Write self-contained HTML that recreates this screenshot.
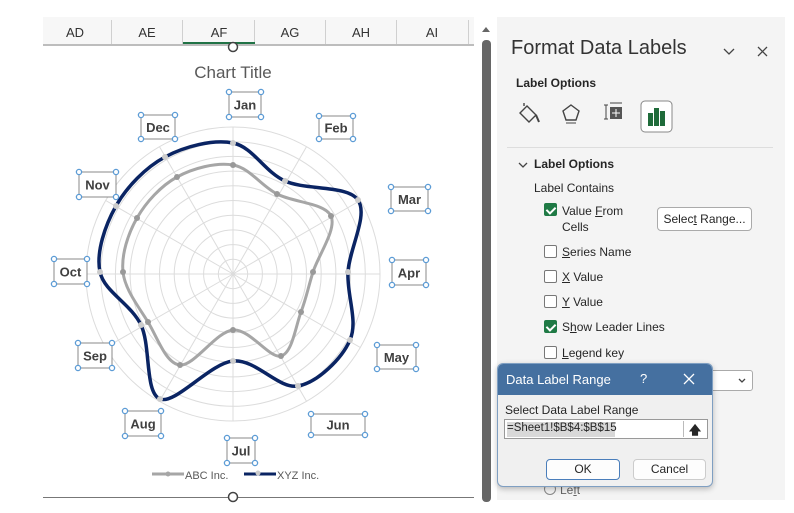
<!DOCTYPE html>
<html><head><meta charset="utf-8"><style>
*{margin:0;padding:0;box-sizing:border-box}
body{width:794px;height:513px;background:#fff;position:relative;overflow:hidden;font-family:"Liberation Sans",sans-serif;color:#262626}
.abs{position:absolute}
.hdr{left:43px;top:17px;width:431px;height:29px;background:#f7f7f7;border-bottom:2px solid #bdbdbd}
.col{position:absolute;top:8px;font-size:13px;color:#333;transform:translateX(-50%)}
.div{position:absolute;top:3px;width:1px;height:24px;background:#d0d0d0}
.panel{left:497px;top:17px;width:288px;height:483px;background:#f4f4f4}
.t{position:absolute;font-size:12px;white-space:nowrap}
.cb{position:absolute;width:13px;height:13px;border:1px solid #777;border-radius:2px;background:#fff}
.cb.on{background:#1f7a45;border-color:#1f7a45}
.cb.on:after{content:"";position:absolute;left:3px;top:1px;width:4px;height:7px;border:solid #fff;border-width:0 2px 2px 0;transform:rotate(45deg)}
u{text-decoration:underline}
</style></head><body>
<div class="abs hdr">
<span class="col" style="left:32px">AD</span><span class="col" style="left:104px">AE</span><span class="col" style="left:176px">AF</span><span class="col" style="left:247px">AG</span><span class="col" style="left:318px">AH</span><span class="col" style="left:389px">AI</span>
<div class="div" style="left:68px"></div><div class="div" style="left:139px"></div><div class="div" style="left:211px"></div><div class="div" style="left:282px"></div><div class="div" style="left:353px"></div><div class="div" style="left:425px"></div>
<div class="abs" style="left:140px;top:25px;width:72px;height:2px;background:#217346"></div>
</div>
<div class="abs" style="left:482px;top:40px;width:9px;height:462px;background:#666;border-radius:4px"></div>
<div class="abs" style="left:482px;top:27px;width:0;height:0;border-left:4px solid transparent;border-right:4px solid transparent;border-bottom:5px solid #666"></div>
<div class="abs" style="left:43px;top:497px;width:431px;height:1px;background:#777"></div>

<svg class="abs" style="left:0;top:0" width="480" height="513" id="ch">
<g stroke="#dcdcdc" fill="none" stroke-width="1" id="grid"></g>
<path id="abc" fill="none" stroke="#a6a6a6" stroke-width="3"/>
<path id="xyz" fill="none" stroke="#0a2463" stroke-width="3.5"/>
<g id="pts"></g>
<text x="233" y="78" font-size="17" fill="#595959" text-anchor="middle" font-family="Liberation Sans">Chart Title</text>
<g id="labs" font-family="Liberation Sans" font-weight="bold" font-size="13" fill="#404040"></g>
<line x1="152" y1="474" x2="184" y2="474" stroke="#a6a6a6" stroke-width="3"/><circle cx="168" cy="474" r="2.5" fill="#a6a6a6"/>
<text x="185" y="479" font-size="11" fill="#595959">ABC Inc.</text>
<line x1="244" y1="474" x2="276" y2="474" stroke="#0a2463" stroke-width="3"/><circle cx="258" cy="473" r="2.5" fill="#ccc"/>
<text x="277" y="479" font-size="11" fill="#595959">XYZ Inc.</text>
<circle cx="233" cy="497" r="4.5" fill="#fff" stroke="#444" stroke-width="1.5"/>
<circle cx="233" cy="47" r="4.5" fill="#fff" stroke="#444" stroke-width="1.5"/>
</svg>

<div class="abs panel">
<div class="t" style="left:14px;top:20px;font-size:20px;color:#333">Format Data Labels</div>
<svg class="abs" style="left:225px;top:28px" width="50" height="14"><path d="M2 4l5 5 5-5" stroke="#444" fill="none" stroke-width="1.3"/><path d="M36 2l9 9M45 2l-9 9" stroke="#444" stroke-width="1.3"/></svg>
<div class="t" style="left:19px;top:59px;font-weight:bold">Label Options</div>
<svg class="abs" style="left:15px;top:82px" width="170" height="42">
<path d="M8 14l7-7 9 9-7 7z" fill="none" stroke="#444" stroke-width="1.4"/><path d="M24 16l3 7" stroke="#444" stroke-width="2"/><path d="M12 7v-3" stroke="#444" stroke-width="1.4"/>
<path d="M59 6l8 6-3 9h-10l-3-9z" fill="none" stroke="#444" stroke-width="1.4"/><path d="M54 24h10" stroke="#444"/>
<path d="M94 6v14M92 6h4M92 20h4M98 4h12" stroke="#444"/><rect x="98" y="8" width="12" height="12" fill="#555"/><path d="M104 10v8M100 14h8" stroke="#fff"/>
<rect x="129" y="2" width="31" height="31" rx="4" fill="#fff" stroke="#888"/><rect x="136" y="14" width="5" height="13" fill="#1f6b3a"/><rect x="142" y="9" width="5" height="18" fill="#1f6b3a"/><rect x="148" y="12" width="5" height="15" fill="#1f6b3a"/>
</svg>
<div class="abs" style="left:10px;top:130px;width:266px;height:1px;background:#ddd"></div>
<svg class="abs" style="left:21px;top:144px" width="10" height="8"><path d="M1 2l4 4 4-4" stroke="#444" fill="none" stroke-width="1.3"/></svg>
<div class="t" style="left:37px;top:140px;font-weight:bold">Label Options</div>
<div class="t" style="left:37px;top:164px">Label Contains</div>
<div class="cb on" style="left:47px;top:186px"></div><div class="t" style="left:65px;top:186px;line-height:16px">Value <u>F</u>rom<br>Cells</div>
<div class="abs" style="left:160px;top:190px;width:95px;height:24px;background:#fff;border:1px solid #aaa;border-radius:4px;font-size:12px;text-align:center;line-height:22px">Selec<u>t</u> Range...</div>
<div class="cb" style="left:47px;top:228px"></div><div class="t" style="left:65px;top:228px"><u>S</u>eries Name</div>
<div class="cb" style="left:47px;top:253px"></div><div class="t" style="left:65px;top:253px"><u>X</u> Value</div>
<div class="cb" style="left:47px;top:278px"></div><div class="t" style="left:65px;top:278px"><u>Y</u> Value</div>
<div class="cb on" style="left:47px;top:303px"></div><div class="t" style="left:65px;top:303px">S<u>h</u>ow Leader Lines</div>
<div class="cb" style="left:47px;top:329px"></div><div class="t" style="left:65px;top:329px"><u>L</u>egend key</div>
<div class="abs" style="left:200px;top:353px;width:56px;height:21px;background:#fff;border:1px solid #aaa;border-radius:3px"></div>
<svg class="abs" style="left:241px;top:361px" width="8" height="6"><path d="M1 1l3 3 3-3" stroke="#444" fill="none" stroke-width="1.3"/></svg>
<div class="abs" style="left:47px;top:466px;width:12px;height:12px;border:1px solid #888;border-radius:50%"></div><div class="t" style="left:63px;top:466px;color:#666">Le<u>f</u>t</div>
</div>

<div class="abs" style="left:497px;top:363px;width:216px;height:124px;background:#f0f0f0;border:1px solid #7f9fc2;border-radius:6px;overflow:hidden;box-shadow:0 2px 6px rgba(0,0,0,.25)">
<div style="height:31px;background:#4570a0;color:#fff;position:relative">
<div class="t" style="left:8px;top:8px;font-size:13px;color:#fff">Data Label Range</div>
<div class="t" style="left:142px;top:7px;font-size:13px;color:#fff">?</div>
<svg class="abs" style="left:185px;top:9px" width="12" height="12"><path d="M1 1l10 10M11 1l-10 10" stroke="#fff" stroke-width="1.3"/></svg>
</div>
<div class="t" style="left:7px;top:39px">Select Data Label Range</div>
<div class="abs" style="left:6px;top:55px;width:204px;height:20px;background:#fff;border:1px solid #999"></div>
<div class="abs" style="left:9px;top:58px;height:15px;width:108px;background:#d8d8d8"></div>
<div class="t" style="left:9px;top:58px;font-size:11.5px">=Sheet1!$B$4:$B$15</div>
<div class="abs" style="left:185px;top:57px;width:23px;height:16px;border-left:1px solid #bbb;text-align:center;font-size:12px;font-weight:bold">&#129093;</div>
<div class="abs" style="left:48px;top:95px;width:74px;height:21px;background:#fdfdfd;border:1px solid #4a7ebb;border-radius:4px;text-align:center;font-size:12px;line-height:19px">OK</div>
<div class="abs" style="left:135px;top:95px;width:73px;height:21px;background:#fdfdfd;border:1px solid #ccc;border-radius:4px;text-align:center;font-size:12px;line-height:19px">Cancel</div>
</div>

<script>
var cx=233,cy=274,R=147,NS="http://www.w3.org/2000/svg";
var g=document.getElementById('grid'),s='';
for(var i=1;i<=10;i++)s+='<circle cx="'+cx+'" cy="'+cy+'" r="'+(R*i/10)+'"/>';
for(var k=0;k<12;k++){var a=k*Math.PI/6;s+='<line x1="'+cx+'" y1="'+cy+'" x2="'+(cx+R*Math.sin(a))+'" y2="'+(cy-R*Math.cos(a))+'"/>';}
g.innerHTML=s;
function cr(p){var n=p.length,d='M'+p[0][0]+' '+p[0][1];for(var i=0;i<n;i++){var p0=p[(i-1+n)%n],p1=p[i],p2=p[(i+1)%n],p3=p[(i+2)%n];
d+=' C'+(p1[0]+(p2[0]-p0[0])/6)+' '+(p1[1]+(p2[1]-p0[1])/6)+' '+(p2[0]-(p3[0]-p1[0])/6)+' '+(p2[1]-(p3[1]-p1[1])/6)+' '+p2[0]+' '+p2[1];}return d+'Z';}
var X=[[233,143],[285,181],[358,200],[348,272],[350,340],[298,386],[233,361],[160,399],[141,325],[100,272],[116,206],[165,157]];
var A=[[233,165],[277,194],[331,216],[313,272],[301,312],[281,356],[233,330],[180,365],[148,322],[123,272],[137,218],[177,177]];
document.getElementById('xyz').setAttribute('d',cr(X));
document.getElementById('abc').setAttribute('d',cr(A));
var ps='';A.forEach(function(p){ps+='<circle cx="'+p[0]+'" cy="'+p[1]+'" r="3" fill="#999"/>'});
X.forEach(function(p){ps+='<circle cx="'+p[0]+'" cy="'+p[1]+'" r="3" fill="#ccc"/>'});
document.getElementById('pts').innerHTML=ps;
var L=[["Jan",229,92,261,117],["Feb",319,116,353,139],["Mar",391,187,428,211],["Apr",392,260,426,285],["May",377,345,416,369],["Jun",311,414,365,435],["Jul",227,438,255,463],["Aug",125,411,161,436],["Sep",78,343,112,368],["Oct",54,259,87,284],["Nov",79,172,116,197],["Dec",141,115,175,139]];
var ls='';L.forEach(function(l){var x1=l[1],y1=l[2],x2=l[3],y2=l[4];
ls+='<rect x="'+x1+'" y="'+y1+'" width="'+(x2-x1)+'" height="'+(y2-y1)+'" fill="#fff" stroke="#888" stroke-width="1"/>';
ls+='<text x="'+((x1+x2)/2)+'" y="'+((y1+y2)/2+5)+'" text-anchor="middle">'+l[0]+'</text>';
[[x1,y1],[x2,y1],[x1,y2],[x2,y2]].forEach(function(c){ls+='<circle cx="'+c[0]+'" cy="'+c[1]+'" r="2.6" fill="#fff" stroke="#5b9bd5" stroke-width="1.3"/>'});});
document.getElementById('labs').innerHTML=ls;
</script>
</body></html>
